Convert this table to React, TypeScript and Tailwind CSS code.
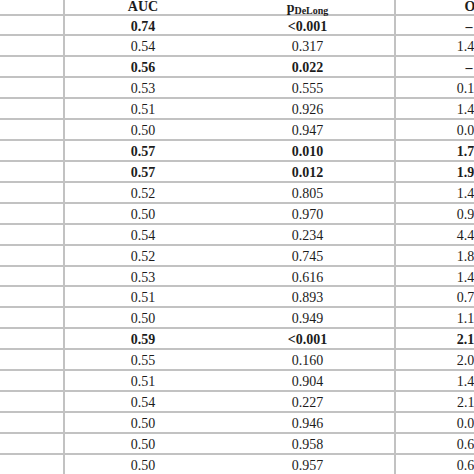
import React from 'react';

type Row = {
  auc: string;
  p: string;
  or: string;
  bold?: boolean;
};

const rows: Row[] = [
  { auc: '0.74', p: '<0.001', or: '–', bold: true },
  { auc: '0.54', p: '0.317', or: '1.44' },
  { auc: '0.56', p: '0.022', or: '–', bold: true },
  { auc: '0.53', p: '0.555', or: '0.13' },
  { auc: '0.51', p: '0.926', or: '1.44' },
  { auc: '0.50', p: '0.947', or: '0.06' },
  { auc: '0.57', p: '0.010', or: '1.73', bold: true },
  { auc: '0.57', p: '0.012', or: '1.95', bold: true },
  { auc: '0.52', p: '0.805', or: '1.44' },
  { auc: '0.50', p: '0.970', or: '0.95' },
  { auc: '0.54', p: '0.234', or: '4.44' },
  { auc: '0.52', p: '0.745', or: '1.83' },
  { auc: '0.53', p: '0.616', or: '1.44' },
  { auc: '0.51', p: '0.893', or: '0.73' },
  { auc: '0.50', p: '0.949', or: '1.13' },
  { auc: '0.59', p: '<0.001', or: '2.13', bold: true },
  { auc: '0.55', p: '0.160', or: '2.06' },
  { auc: '0.51', p: '0.904', or: '1.44' },
  { auc: '0.54', p: '0.227', or: '2.11' },
  { auc: '0.50', p: '0.946', or: '0.06' },
  { auc: '0.50', p: '0.958', or: '0.64' },
  { auc: '0.50', p: '0.957', or: '0.64' },
];

const grid = 'grid grid-cols-[65px_156px_175px_146px]';

export default function App() {
  return (
    <div
      className="w-[474px] h-[474px] overflow-hidden bg-white text-[#1c1c1c] text-[14px]"
      style={{ fontFamily: '"Liberation Serif", "Times New Roman", serif' }}
    >
      {/* header */}
      <div className={`${grid} h-[15.5px] border-b-2 border-[#c2c2c2] font-bold leading-[14px]`}>
        <div className="border-r-2 border-[#c2c2c2]" />
        <div className="text-center">AUC</div>
        <div className="text-center border-r-2 border-[#c2c2c2] pt-[1px]">
          p<sub className="text-[10px] align-baseline relative top-[2px]">DeLong</sub>
        </div>
        <div className="text-center pl-[12px]">OR</div>
      </div>

      {rows.map((r, i) => (
        <div
          key={i}
          className={`${grid} h-[20.93px] border-b-2 border-[#c2c2c2] leading-[14px] ${r.bold ? 'font-bold' : ''}`}
        >
          <div className="border-r-2 border-[#c2c2c2]" />
          <div className="text-center pt-[4px]">{r.auc}</div>
          <div className="text-center pt-[4px] border-r-2 border-[#c2c2c2]">{r.p}</div>
          <div className="text-center pt-[4px]">{r.or}</div>
        </div>
      ))}
    </div>
  );
}
